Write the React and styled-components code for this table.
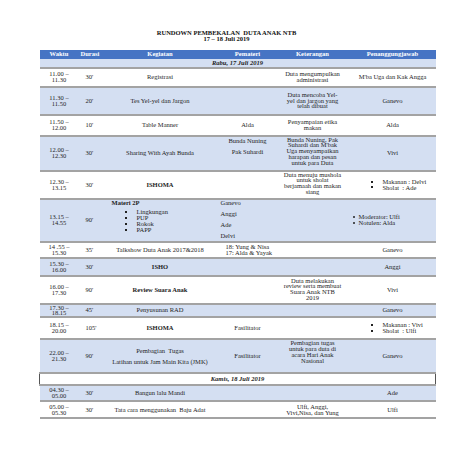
import React from 'react'
import styled, { createGlobalStyle } from 'styled-components'

const GlobalStyle = createGlobalStyle`
    body {
        margin: 0;
        background: #fff;
        font-family: 'Liberation Serif', 'Times New Roman', serif;
        color: #1e1e1e;
    }
`;

const Page = styled.div`
    width: 453px;
    height: 453px;
    padding-top: 30px;
    box-sizing: border-box;
`;

const Title = styled.div`
    text-align: center;
    font-weight: bold;
    font-size: 6.5px;
    line-height: 5.8px;
    color: #111;
`;

const Table = styled.table`
    margin: 8px 0 0 39px;
    width: 396px;
    border-collapse: collapse;
    table-layout: fixed;
    font-size: 6.5px;
    line-height: 5.8px;
    border-bottom: 2px solid #a3a3a3;
`;

const Th = styled.th`
    background: #4674c4;
    color: #fff;
    font-weight: bold;
    height: 9px;
    padding: 0 0 0 ${p => p.$pl || 0}px;
    text-align: ${p => p.$align || 'center'};
    vertical-align: middle;
`;

const Row = styled.tr`
    height: ${p => p.$h}px;
    background: ${p => (p.$shade ? '#d4dff2' : '#fff')};
    & > td {
        border-top: 2px solid #a3a3a3;
    }
`;

const DayRow = styled.tr`
    height: ${p => p.$h}px;
    background: ${p => (p.$shade ? '#d4dff2' : '#fff')};
`;

const DayCell = styled.td`
    text-align: center;
    font-weight: bold;
    font-style: italic;
    padding: 0;
    ${p => p.$boxed && `
        border: 1px solid #555;
        border-top: 2px solid #a3a3a3;
    `}
`;

const Td = styled.td`
    padding: ${p => p.$pt || 0}px ${p => p.$pr || 1}px 0 ${p => p.$pl || 1}px;
    text-align: ${p => p.$align || 'center'};
    vertical-align: ${p => p.$valign || 'middle'};
    font-weight: ${p => (p.$bold ? 'bold' : 'normal')};
    white-space: nowrap;
    overflow: hidden;
`;

const Stack = styled.div`
    display: flex;
    flex-direction: column;
    gap: ${p => p.$gap || 0}px;
    align-items: ${p => p.$items || 'center'};
`;

const Heading = styled.div`
    font-weight: bold;
    padding-left: 10px;
    margin-bottom: 4px;
`;

const List = styled.div`
    display: flex;
    flex-direction: column;
    padding-left: ${p => p.$indent || 0}px;
`;

const Item = styled.div`
    display: flex;
    align-items: center;
    text-align: left;

    &::before {
        content: '';
        flex: none;
        width: 2px;
        height: 2px;
        border-radius: ${p => (p.$dot ? '50%' : '0')};
        background: #222;
        margin-right: ${p => p.$gap || 8}px;
    }
`;

const Time = ({ t }) => {
    const [a, b] = t.split('|')
    return <>{a} –<br />{b}</>
}

const Lines = ({ children }) => {
    const parts = children.split('|')
    return parts.map((p, i) => (
        <React.Fragment key={i}>
            {p}
            {i < parts.length - 1 && <br />}
        </React.Fragment>
    ))
}

export default function App() {
    return (
        <Page>
            <GlobalStyle />
            <Title>
                RUNDOWN PEMBEKALAN&nbsp; DUTA ANAK NTB<br />
                17 – 18 Juli 2019
            </Title>
            <Table>
                <colgroup>
                    <col style={{ width: 39 }} />
                    <col style={{ width: 22 }} />
                    <col style={{ width: 119 }} />
                    <col style={{ width: 56 }} />
                    <col style={{ width: 74 }} />
                    <col style={{ width: 86 }} />
                </colgroup>
                <thead>
                    <tr>
                        <Th>Waktu</Th>
                        <Th $align="left" $pl={2}>Durasi</Th>
                        <Th>Kegiatan</Th>
                        <Th>Pemateri</Th>
                        <Th>Keterangan</Th>
                        <Th>Penanggungjawab</Th>
                    </tr>
                </thead>
                <tbody>
                    <DayRow $h={9} $shade>
                        <DayCell colSpan={6}>Rabu, 17 Juli 2019</DayCell>
                    </DayRow>

                    <Row $h={19}>
                        <Td><Time t="11.00|11.30" /></Td>
                        <Td $align="left" $pl={7}>30'</Td>
                        <Td>Registrasi</Td>
                        <Td></Td>
                        <Td><Lines>Duta mengumpulkan|administrasi</Lines></Td>
                        <Td>M'ba Uga dan Kak Angga</Td>
                    </Row>

                    <Row $h={28} $shade>
                        <Td><Time t="11.30|11.50" /></Td>
                        <Td $align="left" $pl={7}>20'</Td>
                        <Td>Tes Yel-yel dan Jargon</Td>
                        <Td></Td>
                        <Td><Lines>Duta mencoba Yel-|yel dan jargon  yang|telah dibuat</Lines></Td>
                        <Td>Ganevo</Td>
                    </Row>

                    <Row $h={21}>
                        <Td><Time t="11.50|12.00" /></Td>
                        <Td $align="left" $pl={7}>10'</Td>
                        <Td>Table Manner</Td>
                        <Td>Alda</Td>
                        <Td><Lines>Penyampaian etika|makan</Lines></Td>
                        <Td>Alda</Td>
                    </Row>

                    <Row $h={35} $shade>
                        <Td><Time t="12.00|12.30" /></Td>
                        <Td $align="left" $pl={7}>30'</Td>
                        <Td>Sharing With Ayah Bunda</Td>
                        <Td $valign="top" $pt={1}>
                            <Stack $gap={5.5}>
                                <span>Bunda Nuning</span>
                                <span>Pak Suhardi</span>
                            </Stack>
                        </Td>
                        <Td $valign="top" $pt={0}>
                            <Lines>Bunda Nuning, Pak|Suhardi dan M'bak|Uga menyampaikan|harapan dan pesan|untuk para Duta</Lines>
                        </Td>
                        <Td>Vivi</Td>
                    </Row>

                    <Row $h={28}>
                        <Td><Time t="12.30|13.15" /></Td>
                        <Td $align="left" $pl={7}>30'</Td>
                        <Td $bold>ISHOMA</Td>
                        <Td></Td>
                        <Td $valign="top" $pt={0}>
                            <Lines>Duta menuju mushola|untuk sholat|berjamaah dan makan|siang</Lines>
                        </Td>
                        <Td $align="left">
                            <List $indent={20}>
                                <Item $gap={10}>Makanan : Delvi</Item>
                                <Item $gap={10}>Sholat&nbsp; : Ade</Item>
                            </List>
                        </Td>
                    </Row>

                    <Row $h={43} $shade>
                        <Td><Time t="13.15|14.55" /></Td>
                        <Td $align="left" $pl={7}>90'</Td>
                        <Td $align="left" $valign="top" $pt={0}>
                            <Heading>Materi 2P</Heading>
                            <List $indent={23}>
                                <Item $gap={10}>Lingkungan</Item>
                                <Item $gap={10}>PUP</Item>
                                <Item $gap={10}>Rokok</Item>
                                <Item $gap={10}>PAPP</Item>
                            </List>
                        </Td>
                        <Td $align="left" $valign="top" $pt={0}>
                            <Stack $gap={5.2} $items="flex-start">
                                <span>Ganevo</span>
                                <span>Anggi</span>
                                <span>Ade</span>
                                <span>Delvi</span>
                            </Stack>
                        </Td>
                        <Td></Td>
                        <Td $align="left">
                            <List $indent={2}>
                                <Item $dot $gap={4}>Moderator: Ulfi</Item>
                                <Item $dot $gap={4}>Notulen: Alda</Item>
                            </List>
                        </Td>
                    </Row>

                    <Row $h={16}>
                        <Td><Time t="14 .55|15.30" /></Td>
                        <Td $align="left" $pl={7}>35'</Td>
                        <Td>Talkshow Duta Anak 2017&amp;2018</Td>
                        <Td $align="left" $pl={6}>18: Yung &amp; Nisa<br />17: Alda &amp; Yayak</Td>
                        <Td></Td>
                        <Td>Ganevo</Td>
                    </Row>

                    <Row $h={18} $shade>
                        <Td><Time t="15.30|16.00" /></Td>
                        <Td $align="left" $pl={7}>30'</Td>
                        <Td $bold>ISHO</Td>
                        <Td></Td>
                        <Td></Td>
                        <Td>Anggi</Td>
                    </Row>

                    <Row $h={28}>
                        <Td><Time t="16.00|17.30" /></Td>
                        <Td $align="left" $pl={7}>90'</Td>
                        <Td $bold>Review Suara Anak</Td>
                        <Td></Td>
                        <Td $valign="top" $pt={1}>
                            <Lines>Duta melakukan|review serta membuat|Suara Anak NTB|2019</Lines>
                        </Td>
                        <Td>Vivi</Td>
                    </Row>

                    <Row $h={11} $shade>
                        <Td><Time t="17.30|18.15" /></Td>
                        <Td $align="left" $pl={7}>45'</Td>
                        <Td>Penyusunan RAD</Td>
                        <Td></Td>
                        <Td></Td>
                        <Td>Ganevo</Td>
                    </Row>

                    <Row $h={22}>
                        <Td><Time t="18.15|20.00" /></Td>
                        <Td $align="left" $pl={7}>105'</Td>
                        <Td $bold>ISHOMA</Td>
                        <Td>Fasilitator</Td>
                        <Td></Td>
                        <Td $align="left">
                            <List $indent={20}>
                                <Item $gap={10}>Makanan : Vivi</Item>
                                <Item $gap={10}>Sholat&nbsp; : Ulfi</Item>
                            </List>
                        </Td>
                    </Row>

                    <Row $h={34} $shade>
                        <Td><Time t="22.00|21.30" /></Td>
                        <Td $align="left" $pl={7}>90'</Td>
                        <Td>
                            <Stack $gap={5}>
                                <span>Pembagian&nbsp; Tugas</span>
                                <span>Latihan untuk Jam Main Kita (JMK)</span>
                            </Stack>
                        </Td>
                        <Td>Fasilitator</Td>
                        <Td $valign="top" $pt={0}>
                            <Lines>Pembagian tugas|untuk para duta di|acara Hari Anak|Nasional</Lines>
                        </Td>
                        <Td>Ganevo</Td>
                    </Row>

                    <DayRow $h={12}>
                        <DayCell colSpan={6} $boxed>Kamis, 18 Juli 2019</DayCell>
                    </DayRow>

                    <Row $h={16} $shade>
                        <Td><Time t="04.30|05.00" /></Td>
                        <Td $align="left" $pl={7}>30'</Td>
                        <Td>Bangun lalu Mandi</Td>
                        <Td></Td>
                        <Td></Td>
                        <Td>Ade</Td>
                    </Row>

                    <Row $h={17}>
                        <Td><Time t="05.00|05.30" /></Td>
                        <Td $align="left" $pl={7}>30'</Td>
                        <Td>Tata cara menggunakan&nbsp; Baju Adat</Td>
                        <Td></Td>
                        <Td><Lines>Ulfi, Anggi,|Vivi,Nisa, dan Yung</Lines></Td>
                        <Td>Ulfi</Td>
                    </Row>
                </tbody>
            </Table>
        </Page>
    )
}
